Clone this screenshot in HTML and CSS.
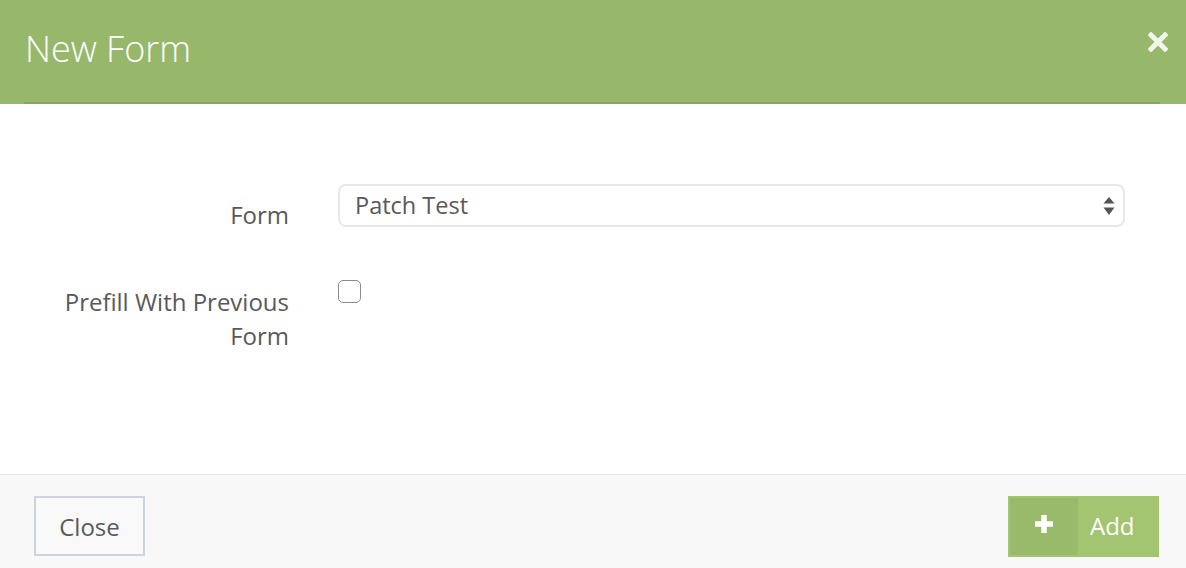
FILE: index.html
```html
<!DOCTYPE html>
<html>
<head>
<meta charset="utf-8">
<link rel="stylesheet" href="styles.css">
</head>
<body>
<div class="modal">
  <div class="header">
    <div class="header-inner">
      <h1 class="title">New Form</h1>
      <span class="close-x">
        <svg width="20" height="20" viewBox="0 0 20 20"><path d="M3 3 L17 17 M17 3 L3 17" stroke="#f2f6ec" stroke-width="5" stroke-linecap="square"/></svg>
      </span>
    </div>
  </div>
  <div class="body">
    <div class="row">
      <label class="label label-first">Form</label>
      <div class="select">
        <span class="select-text">Patch Test</span>
        <svg class="arrows" width="12" height="20" viewBox="0 0 12 20"><path d="M6 1 L11.5 7.5 L0.5 7.5 Z M0.5 11.5 L11.5 11.5 L6 19 Z" fill="#555"/></svg>
      </div>
    </div>
    <div class="row row-check">
      <label class="label label-check">Prefill With Previous<br>Form</label>
      <span class="checkbox"></span>
    </div>
  </div>
  <div class="footer">
    <button class="btn-close">Close</button>
    <button class="btn-add">
      <span class="add-icon">
        <svg width="20" height="20" viewBox="0 0 20 20"><path d="M10 1 V19 M1 10 H19" stroke="#fff" stroke-width="5.5"/></svg>
      </span>
      <span class="add-text">Add</span>
    </button>
  </div>
</div>
</body>
</html>
```

FILE: styles.css
```css
html, body {
  margin: 0;
  padding: 0;
  background: #ffffff;
}
body {
  font-family: "Open Sans", "Liberation Sans", sans-serif;
  color: #595959;
}
.modal {
  width: 1186px;
  height: 568px;
  display: flex;
  flex-direction: column;
  overflow: hidden;
}
.header {
  background: #97b86b;
  height: 104px;
  padding: 0 26px 0 24px;
  box-sizing: border-box;
}
.header-inner {
  height: 104px;
  box-sizing: border-box;
  border-bottom: 2px solid #89a562;
  display: flex;
  align-items: center;
  justify-content: space-between;
}
.title {
  margin: 0 0 4px 1px;
  font-size: 36px;
  font-weight: 300;
  color: #ffffff;
  line-height: 1;
}
.close-x {
  display: flex;
  margin-right: -8px;
  margin-top: -18px;
}
.body {
  flex: 1;
  padding: 80px 61px 0 0;
  box-sizing: border-box;
}
.row {
  display: flex;
  align-items: flex-start;
}
.label {
  width: 289px;
  flex: none;
  text-align: right;
  font-size: 24px;
  line-height: 34px;
  color: #595959;
  margin-right: 49px;
}
.label-first {
  margin-top: 14px;
}
.select {
  flex: 1;
  height: 43px;
  box-sizing: border-box;
  border: 2px solid #e8e8e8;
  border-radius: 8px;
  display: flex;
  align-items: center;
  justify-content: space-between;
  padding: 0 8px 0 15px;
}
.select-text {
  font-size: 23.5px;
  color: #595959;
  margin-top: -1px;
}
.arrows {
  display: block;
}
.row-check {
  margin-top: 48px;
}
.label-check {
  margin-top: 5px;
}
.checkbox {
  width: 23px;
  height: 23px;
  box-sizing: border-box;
  border: 1px solid #8c8c8c;
  border-radius: 5px;
  background: #fff;
}
.footer {
  height: 94px;
  box-sizing: border-box;
  border-top: 1px solid #e6e6e6;
  background: #f8f8f8;
  display: flex;
  justify-content: space-between;
  align-items: flex-start;
  padding: 21px 27px 0 34px;
}
.btn-close {
  width: 111px;
  height: 60px;
  box-sizing: border-box;
  border: 2px solid #ccd4e0;
  background: #f9f9f9;
  font-family: "Open Sans", "Liberation Sans", sans-serif;
  font-size: 24px;
  color: #595959;
  padding: 0;
  cursor: pointer;
}
.btn-add {
  width: 151px;
  height: 61px;
  box-sizing: border-box;
  border: 2px solid #a3c470;
  background: #a3c470;
  padding: 0;
  display: flex;
  align-items: stretch;
  font-family: "Open Sans", "Liberation Sans", sans-serif;
  cursor: pointer;
}
.add-icon {
  width: 68px;
  background: #9aba6b;
  display: flex;
  align-items: center;
  justify-content: center;
}
.add-icon svg {
  margin-top: -5px;
}
.add-text {
  flex: 1;
  display: flex;
  align-items: center;
  justify-content: flex-start;
  padding-left: 12px;
  font-size: 24px;
  color: #ffffff;
  margin-top: -3px;
}
```
